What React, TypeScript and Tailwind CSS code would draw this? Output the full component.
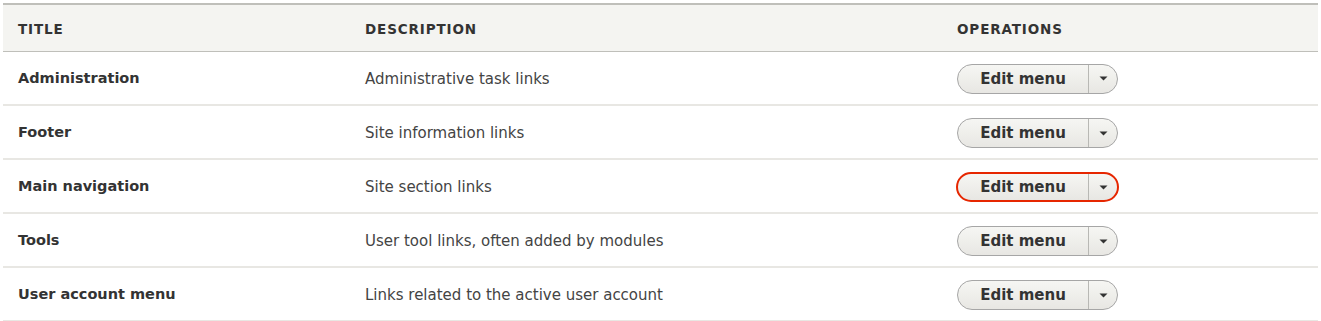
const rows = [
  { title: "Administration", desc: "Administrative task links" },
  { title: "Footer", desc: "Site information links" },
  { title: "Main navigation", desc: "Site section links", focus: true },
  { title: "Tools", desc: "User tool links, often added by modules" },
  { title: "User account menu", desc: "Links related to the active user account" },
];

const EditButton = ({ focus }: { focus?: boolean }) => {
  return (
    <div
      className={
        "inline-flex h-[30px] items-stretch rounded-full bg-gradient-to-b from-[#f6f6f3] to-[#e8e7e3] " +
        (focus ? "border-2 border-[#e62600] -m-px" : "border border-[#a6a6a6]")
      }
    >
      <span className="flex w-[130px] items-center justify-center text-[15px] font-bold text-[#333]">Edit menu</span>
      <span className="flex w-[29px] items-center justify-center border-l border-[#b8b8b4]">
        <svg width="9" height="5" viewBox="0 0 9 5">
          <path d="M0.5 0.5 L8.5 0.5 L4.5 4.5 Z" fill="#333" />
        </svg>
      </span>
    </div>
  );
};

export default function App() {
  return (
    <div className="px-[3px] pt-[3px] bg-white" style={{ fontFamily: "'DejaVu Sans', sans-serif" }}>
      <table className="w-full border-collapse text-[15px] text-[#333]">
        <thead>
          <tr className="bg-[#f4f4f1] border-t-2 border-b border-[#bfbfba]">
            <th className="w-[347px] h-[47px] pl-[15px] pt-[2px] text-left text-[13.5px] font-bold uppercase tracking-[0.065em] text-[#333]">Title</th>
            <th className="w-[592px] pl-[15px] pt-[2px] text-left text-[13.5px] font-bold uppercase tracking-[0.065em] text-[#333]">Description</th>
            <th className="pl-[15px] pt-[2px] text-left text-[13.5px] font-bold uppercase tracking-[0.065em] text-[#333]">Operations</th>
          </tr>
        </thead>
        <tbody>
          {rows.map((r) => (
            <tr key={r.title} className="border-b-2 border-[#e8e7e3] h-[54px]">
              <td className="pl-[15px] pt-[2px] text-[14.5px] font-bold">{r.title}</td>
              <td className="pl-[15px] pt-[2px] text-[#444]">{r.desc}</td>
              <td className="pl-[15px] pt-[2px]">
                <EditButton focus={r.focus} />
              </td>
            </tr>
          ))}
        </tbody>
      </table>
    </div>
  );
}
